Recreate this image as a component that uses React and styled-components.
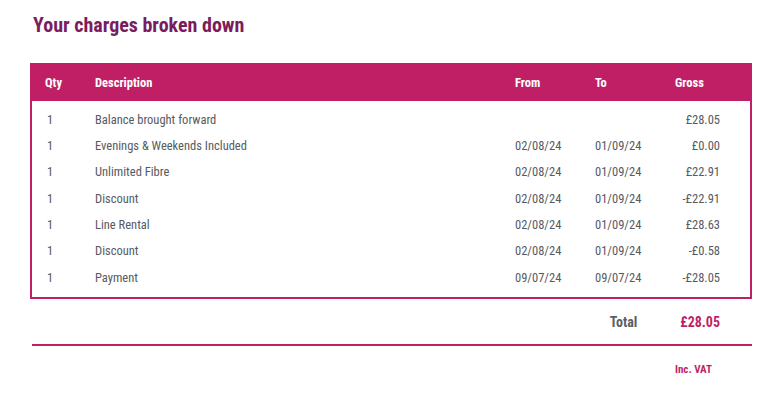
import styled, { createGlobalStyle } from "styled-components";

const GlobalStyle = createGlobalStyle`
  body {
    margin: 0;
    background: #fff;
    font-family: "Roboto Condensed", "Open Sans Condensed", "Liberation Sans", sans-serif;
  }
`;

const charges = [
  { qty: 1, desc: "Balance brought forward", from: "", to: "", gross: "£28.05" },
  { qty: 1, desc: "Evenings & Weekends Included", from: "02/08/24", to: "01/09/24", gross: "£0.00" },
  { qty: 1, desc: "Unlimited Fibre", from: "02/08/24", to: "01/09/24", gross: "£22.91" },
  { qty: 1, desc: "Discount", from: "02/08/24", to: "01/09/24", gross: "-£22.91" },
  { qty: 1, desc: "Line Rental", from: "02/08/24", to: "01/09/24", gross: "£28.63" },
  { qty: 1, desc: "Discount", from: "02/08/24", to: "01/09/24", gross: "-£0.58" },
  { qty: 1, desc: "Payment", from: "09/07/24", to: "09/07/24", gross: "-£28.05" },
];

export default function App() {
  return (
    <>
      <GlobalStyle />
      <PageStyled>
        <TitleStyled>Your charges broken down</TitleStyled>
        <TableStyled>
          <HeadRowStyled>
            <span>Qty</span>
            <span>Description</span>
            <span>From</span>
            <span>To</span>
            <span>Gross</span>
          </HeadRowStyled>
          <BodyStyled>
            {charges.map((c, i) => (
              <RowStyled key={i}>
                <span>{c.qty}</span>
                <span>{c.desc}</span>
                <span>{c.from}</span>
                <span>{c.to}</span>
                <GrossStyled>{c.gross}</GrossStyled>
              </RowStyled>
            ))}
          </BodyStyled>
        </TableStyled>
        <TotalRowStyled>
          <TotalLabelStyled>Total</TotalLabelStyled>
          <TotalValueStyled>£28.05</TotalValueStyled>
        </TotalRowStyled>
        <VatStyled>Inc. VAT</VatStyled>
      </PageStyled>
    </>
  );
}

const PageStyled = styled.main`
  width: 722px;
  padding: 12px 0 0 30px;
`;
const TitleStyled = styled.h1`
  margin: 0 0 0 3px;
  font-size: 20px;
  line-height: 26px;
  font-weight: 700;
  color: #7a1c5d;
`;
const TableStyled = styled.section`
  margin-top: 25px;
`;
const cols = `
  display: grid;
  grid-template-columns: 50px 420px 80px 80px 45px;
  align-items: center;
`;
const HeadRowStyled = styled.div`
  ${cols}
  height: 38px;
  padding-left: 15px;
  background: #c01f66;
  color: #fff;
  font-size: 12.5px;
  font-weight: 700;
`;
const BodyStyled = styled.div`
  border: 2px solid #c01f66;
  border-top: none;
  padding: 5px 0 7px;
`;
const RowStyled = styled.div`
  ${cols}
  height: 26.34px;
  padding-left: 13px;
  color: #575a62;
  font-size: 12.5px;
  span:first-child {
    padding-left: 2px;
  }
`;
const GrossStyled = styled.span`
  text-align: right;
`;
const TotalRowStyled = styled.div`
  display: flex;
  justify-content: flex-end;
  align-items: center;
  height: 45px;
  padding-right: 32px;
  border-bottom: 2px solid #c01f66;
  margin-left: 2px;
`;
const TotalLabelStyled = styled.span`
  font-size: 14px;
  font-weight: 700;
  color: #5a5e66;
  margin-right: 43px;
`;
const TotalValueStyled = styled.span`
  font-size: 14px;
  font-weight: 700;
  color: #c01f66;
`;
const VatStyled = styled.div`
  text-align: right;
  padding: 17px 40px 0 0;
  font-size: 11px;
  font-weight: 700;
  color: #c01f66;
`;
